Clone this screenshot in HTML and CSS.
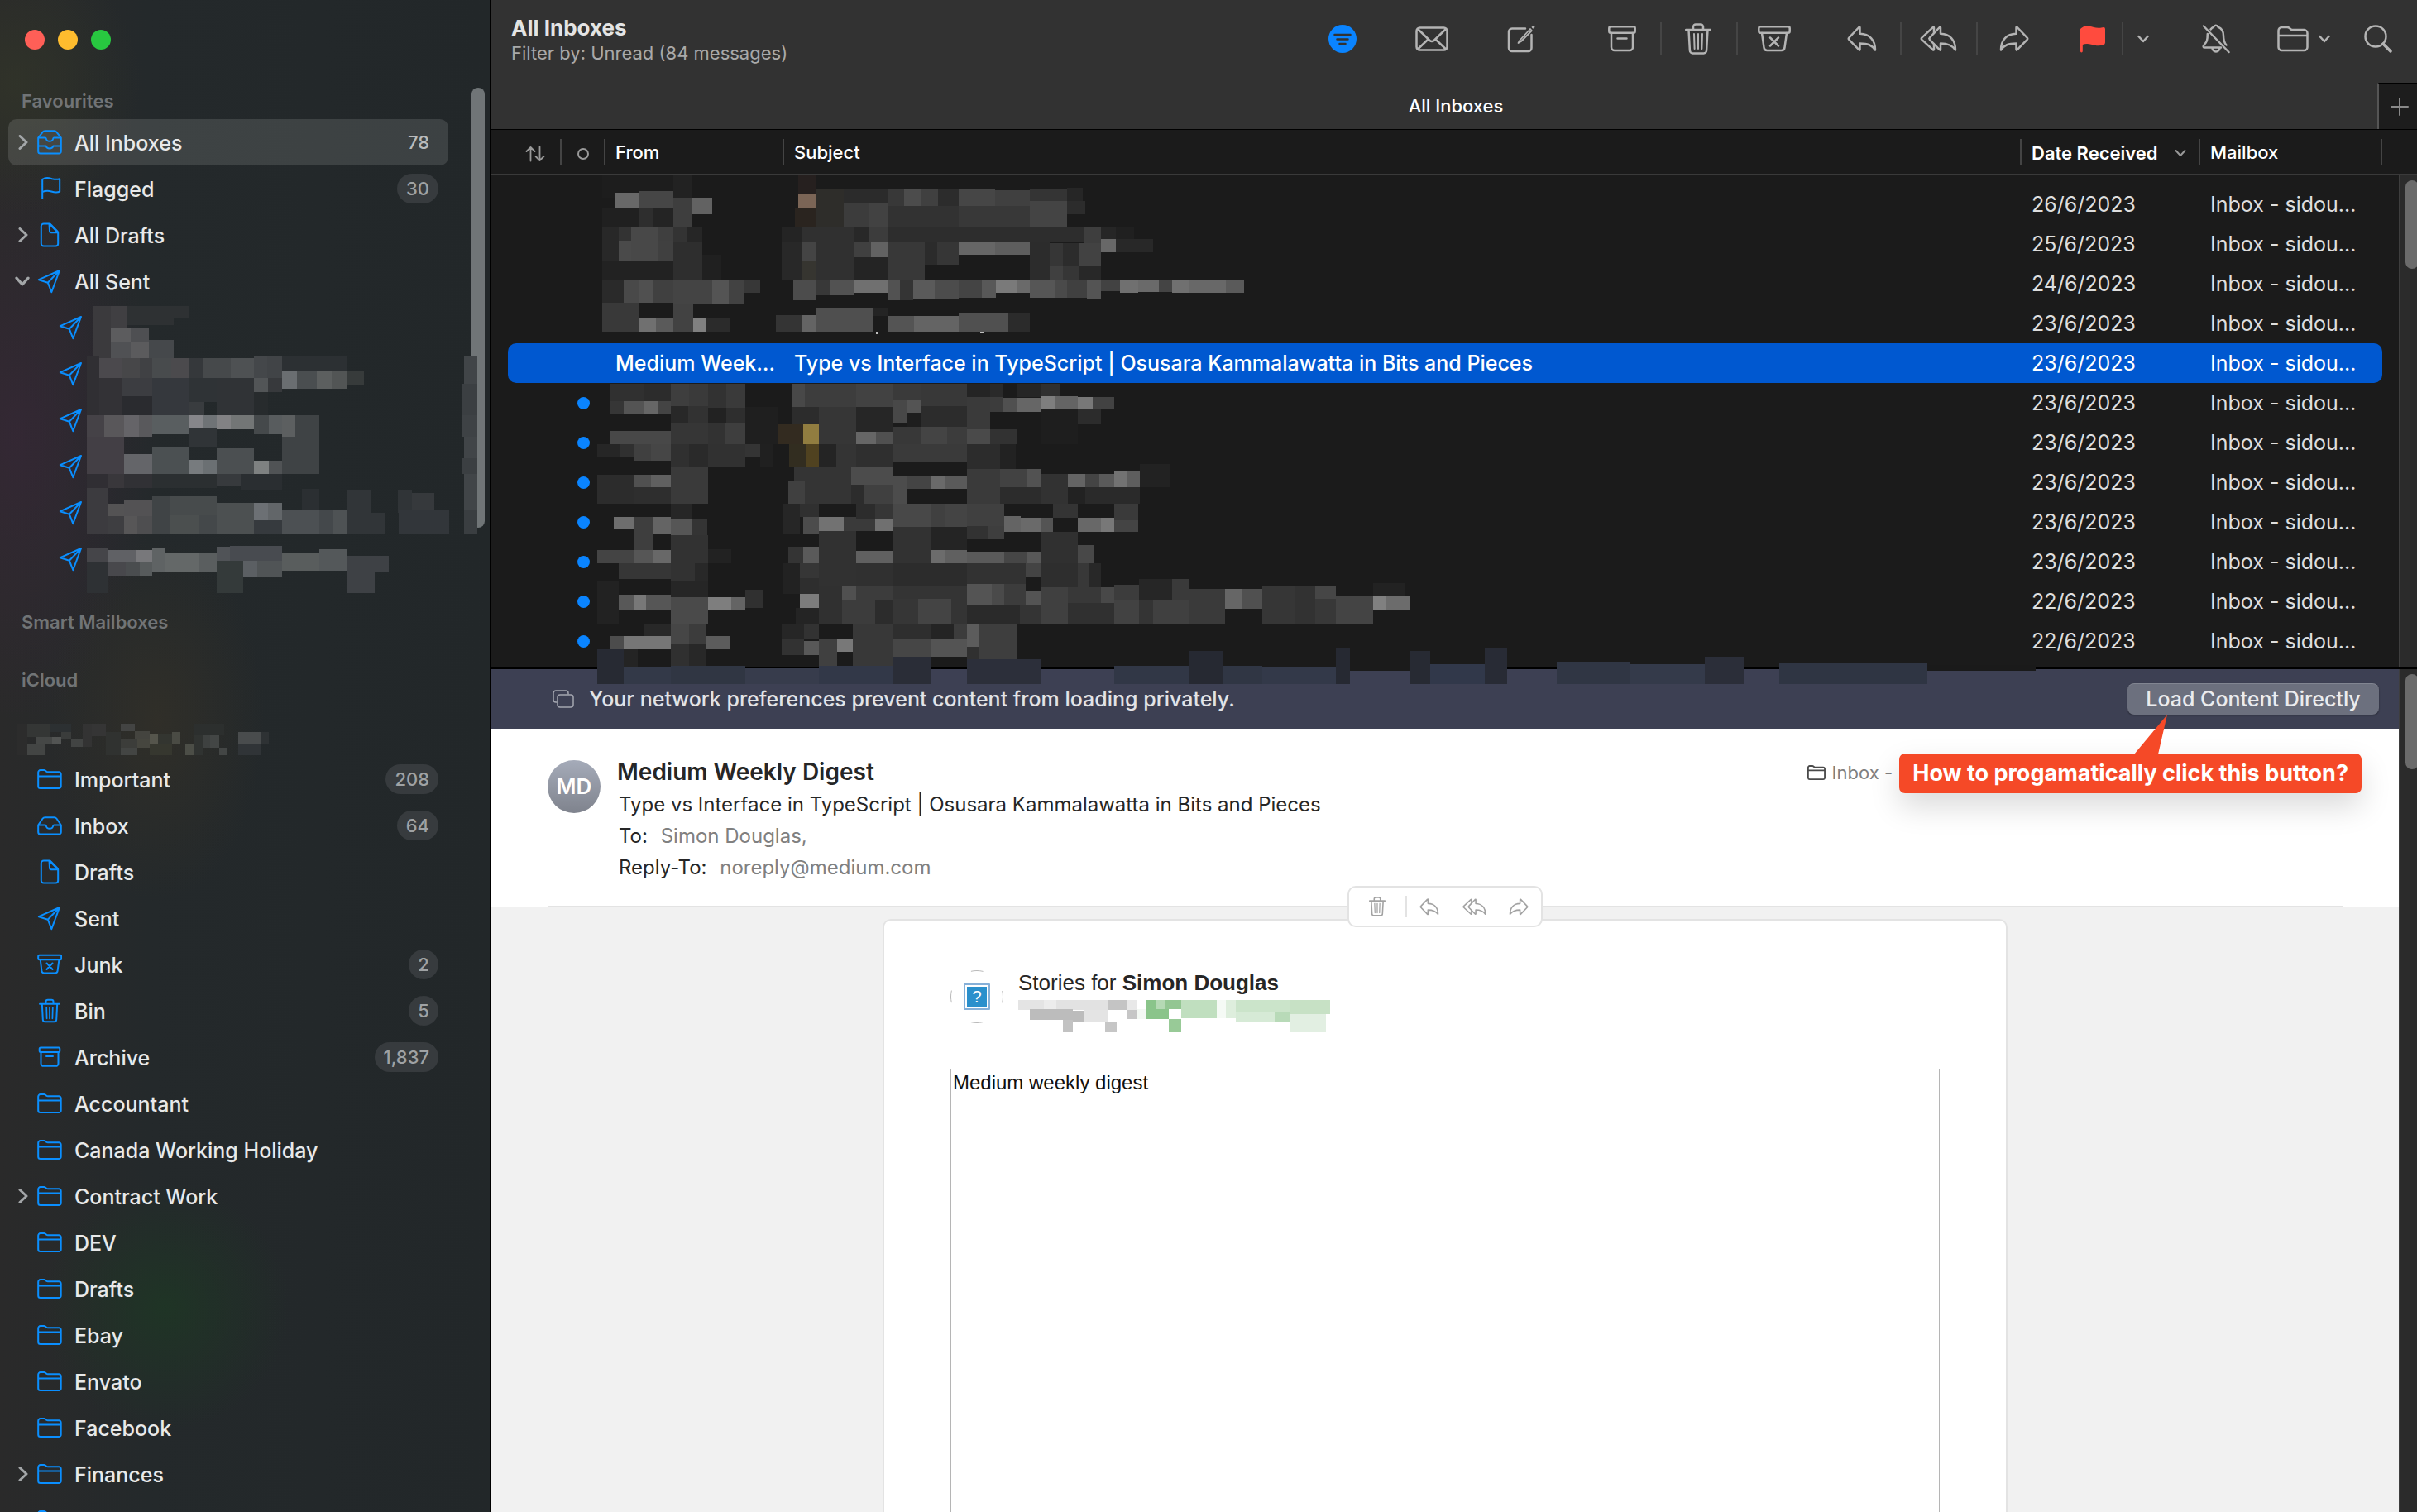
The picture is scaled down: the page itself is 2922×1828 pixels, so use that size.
FILE: index.html
```html
<!DOCTYPE html>
<html lang="en">
<head>
    <meta charset="UTF-8">
    <meta name="viewport" content="width=device-width, initial-scale=1.0">
    <title>All Inboxes</title>
    <link rel="stylesheet" href="styles.css">
</head>
<body>
    <!-- Icon sprite -->
    <svg class="sprite">
        <symbol id="i-filter" viewBox="0 0 34 34"><circle cx="17" cy="17" r="17" fill="#0a84ff" stroke="none"/><path d="M7.500 12h19M10.500 17.500h13M13.500 23h7" stroke="#323232" stroke-width="2.500"/></symbol>
        <symbol id="i-mail" viewBox="0 0 40 32"><rect x="1.500" y="2.500" width="37" height="27" rx="4"/><path d="M3 4l14.500 14q2.500 2 5 0L37 4M3 28.500l12.500-12M37 28.500l-12.500-12"/></symbol>
        <symbol id="i-compose" viewBox="0 0 34 34"><path d="M22 4.500H6a4 4 0 0 0-4 4V28a4 4 0 0 0 4 4h19.500a4 4 0 0 0 4-4V12"/><path d="M28 5L15.500 18.500l-2 3.500 3.500-2L29.800 7z" stroke-width="1.800"/><circle cx="31.500" cy="2.800" r="1.300" fill="currentColor" stroke-width="1"/></symbol>
        <symbol id="i-archive" viewBox="0 0 34 32"><rect x="1.300" y="1.300" width="31.400" height="7.500" rx="2"/><path d="M4 9v17a4 4 0 0 0 4 4h18a4 4 0 0 0 4-4V9M11.500 15.500h11"/></symbol>
        <symbol id="i-trash" viewBox="0 0 32 38"><path d="M1.200 8h29.600M10 8V4.500a3 3 0 0 1 3-3h6a3 3 0 0 1 3 3V8M4.500 8l1.400 25a3.500 3.500 0 0 0 3.500 3.400h13.200a3.500 3.500 0 0 0 3.500-3.400L27.500 8"/><path d="M11 13l.6 18M16 13v18M21 13l-.6 18" stroke-width="2"/></symbol>
        <symbol id="i-junk" viewBox="0 0 40 32"><rect x="1.300" y="1.300" width="37.400" height="7.500" rx="2"/><path d="M5 9l2.500 17.500a4 4 0 0 0 4 3.500h17a4 4 0 0 0 4-3.500L35 9M15 14.500l10 10M25 14.500l-10 10"/></symbol>
        <symbol id="i-reply" viewBox="0 0 36 32"><path d="M15.500 2.500v7.200C27 10 34 17 34 29.500 30 23.500 25 21.500 15.500 21.500v7.300q0 1.500-1.200.4L2.300 16.800q-1-1.200 0-2.200L14.300 2q1.200-1 1.200.5z"/></symbol>
        <symbol id="i-replyall" viewBox="0 0 45 32"><path d="M25 2.500v7.200C36 10 43 17 43 29.500 39 23.500 34 21.500 25 21.500v7.300q0 1.500-1.200.4L11.800 16.800q-1-1.200 0-2.200L23.800 2q1.200-1 1.200.5z"/><path d="M17 9V3q0-1.800-1.300-.8L2.300 14.600q-1 1.100 0 2.200L15.700 29.200q1.300 1 1.300-.8v-6"/></symbol>
        <symbol id="i-forward" viewBox="0 0 36 32"><path d="M20.500 2.500v7.200C9 10 2 17 2 29.500 6 23.500 11 21.500 20.500 21.500v7.300q0 1.500 1.200.4l12-12.400q1-1.200 0-2.200L21.700 2q-1.200-1-1.200.5z"/></symbol>
        <symbol id="i-redflag" viewBox="0 0 30 33"><path d="M0 4C3 1 7 0 11 .8c5 1 9 3 15.500 1.400Q30 1.200 30 4v16.500q0 2-2 2.800c-6 2-10 .7-15-.6-4-1-7-1-10.200.4V31a1.400 1.400 0 0 1-2.800 0z" fill="#ff4b3e" stroke="none"/></symbol>
        <symbol id="i-chevdown" viewBox="0 0 14 10"><path d="M1.500 2L7 8l5.500-6"/></symbol>
        <symbol id="i-chevright" viewBox="0 0 12 18"><path d="M2 1.500l8 7.500-8 7.500"/></symbol>
        <symbol id="i-bell" viewBox="0 0 34 36"><path d="M10.500 6.500C12 4.500 13 4 14 3.700a3 3 0 0 1 5.600 0C24 5.500 26 9 26 14c0 6 .7 8.500 3.500 11.500M6.800 12c0 8-1 10-4.300 13.500-1.500 2-.8 3 1 3H23M12.500 29a4.500 4.500 0 0 0 9 0M2 2.500L32.500 34"/></symbol>
        <symbol id="i-bigfolder" viewBox="0 0 38 32"><path d="M1.500 6a4 4 0 0 1 4-4h6.500q1.600 0 2.800 1l1.500 1.200q1 .9 2.500.9H32.500a4 4 0 0 1 4 4V26a4 4 0 0 1-4 4h-27a4 4 0 0 1-4-4zM1.500 12h35"/></symbol>
        <symbol id="i-search" viewBox="0 0 34 34"><circle cx="14" cy="14" r="12.500"/><path d="M23 23l9 9" stroke-width="3.500"/></symbol>
        <symbol id="i-sort" viewBox="0 0 24 20"><path d="M6.500 18.500V2M1.500 7l5-5 5 5M17.500 1.500V18M12.500 13l5 5 5-5"/></symbol>
        <symbol id="i-plus" viewBox="0 0 22 22"><path d="M11 1v20M1 11h20"/></symbol>
        <symbol id="i-windows" viewBox="0 0 26 22"><path d="M5 15H4a3 3 0 0 1-3-3V4a3 3 0 0 1 3-3h12a3 3 0 0 1 3 3v1"/><rect x="6" y="6" width="19" height="15" rx="3"/></symbol>

        <symbol id="i-inboxes" viewBox="0 0 30 30"><path d="M1.200 26V9.500L6.500 2.800Q7.600 1.200 9.500 1.200h11q1.900 0 3 1.600l5.300 6.700V26a2.600 2.600 0 0 1-2.600 2.600H3.800A2.600 2.600 0 0 1 1.200 26zM1.200 9.500h8.500q.8 0 1 .9a4.400 4.400 0 0 0 8.600 0q.2-.9 1-.9h8.500M1.200 19.500h9.500a4.400 3.800 0 0 0 8.600 0h9.500"/></symbol>
        <symbol id="i-flag" viewBox="0 0 30 30"><path d="M6.200 27V3.800C11 .8 14 2 18 3.200c3.500.8 6 .9 9.200 0V18.600c-3.500 1.400-6.500.9-10-.1-4-1.100-7-1.200-11 .6"/></symbol>
        <symbol id="i-doc" viewBox="0 0 30 30"><path d="M14.500 1.500H7.800a3 3 0 0 0-3 3v21a3 3 0 0 0 3 3h14.400a3 3 0 0 0 3-3V12.300zM14.500 1.500q1.200 0 2 .9l7.800 8q.9.900.9 1.900H17q-2 0-2-2z"/></symbol>
        <symbol id="i-plane" viewBox="0 0 30 30"><path d="M27 2L1.800 13.200l11 3.500 4.500 11.500zM27 2L12.800 16.700"/></symbol>
        <symbol id="i-folder" viewBox="0 0 30 30"><path d="M1.200 6.700a2.600 2.600 0 0 1 2.600-2.600h4.500q1 0 1.700.6l1.200 1q.7.600 1.700.600h13.200a2.600 2.600 0 0 1 2.600 2.600V23.500a2.600 2.600 0 0 1-2.600 2.600H3.800a2.600 2.600 0 0 1-2.600-2.600zM1.200 11.500h27.500"/></symbol>
        <symbol id="i-inbox" viewBox="0 0 30 30"><path d="M1.200 23V14.500L6.500 6.800Q7.600 5.200 9.500 5.200h11q1.900 0 3 1.600l5.300 7.700V23a2.600 2.600 0 0 1-2.600 2.600H3.800A2.600 2.600 0 0 1 1.200 23zM1.200 14.500h8.500q.8 0 1 .9a4.400 4.400 0 0 0 8.600 0q.2-.9 1-.9h8.500"/></symbol>
        <symbol id="i-sjunk" viewBox="0 0 30 30"><rect x="1.200" y="3.800" width="28" height="5.500" rx="1.500"/><path d="M3.800 9.300l1.600 13.500a3 3 0 0 0 3 2.600h13.200a3 3 0 0 0 3-2.600L26.400 9.300M11.500 13.500l7 7.500M18.500 13.500l-7 7.500"/></symbol>
        <symbol id="i-strash" viewBox="0 0 30 30"><path d="M3 6.800h24M10.500 6.800V4a2.300 2.300 0 0 1 2.300-2.300h4.400A2.300 2.300 0 0 1 19.500 4v2.800M5.800 6.800l1 19a2.600 2.600 0 0 0 2.600 2.500h11.200a2.600 2.600 0 0 0 2.600-2.500l1-19"/><path d="M11.200 10.800l.4 13.500M15 10.800v13.500M18.800 10.800l-.4 13.500" stroke-width="1.700"/></symbol>
        <symbol id="i-sarchive" viewBox="0 0 30 30"><rect x="2.700" y="3.500" width="24.600" height="5.500" rx="1.500"/><path d="M4.500 9v13.800a3 3 0 0 0 3 3h15a3 3 0 0 0 3-3V9M11 14h8"/></symbol>
    </svg>

    <div class="window">
        <aside class="sidebar">
            <div class="traffic">
                <button class="light close" aria-label="Close"></button>
                <button class="light minimise" aria-label="Minimise"></button>
                <button class="light zoom" aria-label="Zoom"></button>
            </div>

            <h2 class="section">Favourites</h2>
            <nav class="folders">
                <a href="#" class="folder active"><svg class="chev"><use href="#i-chevright"/></svg><svg class="icon"><use href="#i-inboxes"/></svg><span class="label">All Inboxes</span><span class="count">78</span></a>
                <a href="#" class="folder"><span class="chev"></span><svg class="icon"><use href="#i-flag"/></svg><span class="label">Flagged</span><span class="count">30</span></a>
                <a href="#" class="folder"><svg class="chev"><use href="#i-chevright"/></svg><svg class="icon"><use href="#i-doc"/></svg><span class="label">All Drafts</span></a>
                <a href="#" class="folder"><svg class="chev open"><use href="#i-chevdown"/></svg><svg class="icon"><use href="#i-plane"/></svg><span class="label">All Sent</span></a>
                <a href="#" class="folder sub" aria-label="Sent 1"><svg class="icon"><use href="#i-plane"/></svg></a>
                <a href="#" class="folder sub" aria-label="Sent 2"><svg class="icon"><use href="#i-plane"/></svg></a>
                <a href="#" class="folder sub" aria-label="Sent 3"><svg class="icon"><use href="#i-plane"/></svg></a>
                <a href="#" class="folder sub" aria-label="Sent 4"><svg class="icon"><use href="#i-plane"/></svg></a>
                <a href="#" class="folder sub" aria-label="Sent 5"><svg class="icon"><use href="#i-plane"/></svg></a>
                <a href="#" class="folder sub" aria-label="Sent 6"><svg class="icon"><use href="#i-plane"/></svg></a>
            </nav>

            <h2 class="section">Smart Mailboxes</h2>
            <h2 class="section">iCloud</h2>
            <div class="account"><svg class="tiles" data-tiles="account" viewBox="55 406 794 106" preserveAspectRatio="none"></svg></div>
            <nav class="folders">
                <a href="#" class="folder"><span class="chev"></span><svg class="icon"><use href="#i-folder"/></svg><span class="label">Important</span><span class="count">208</span></a>
                <a href="#" class="folder"><span class="chev"></span><svg class="icon"><use href="#i-inbox"/></svg><span class="label">Inbox</span><span class="count">64</span></a>
                <a href="#" class="folder"><span class="chev"></span><svg class="icon"><use href="#i-doc"/></svg><span class="label">Drafts</span></a>
                <a href="#" class="folder"><span class="chev"></span><svg class="icon"><use href="#i-plane"/></svg><span class="label">Sent</span></a>
                <a href="#" class="folder"><span class="chev"></span><svg class="icon"><use href="#i-sjunk"/></svg><span class="label">Junk</span><span class="count">2</span></a>
                <a href="#" class="folder"><span class="chev"></span><svg class="icon"><use href="#i-strash"/></svg><span class="label">Bin</span><span class="count">5</span></a>
                <a href="#" class="folder"><span class="chev"></span><svg class="icon"><use href="#i-sarchive"/></svg><span class="label">Archive</span><span class="count">1,837</span></a>
                <a href="#" class="folder"><span class="chev"></span><svg class="icon"><use href="#i-folder"/></svg><span class="label">Accountant</span></a>
                <a href="#" class="folder"><span class="chev"></span><svg class="icon"><use href="#i-folder"/></svg><span class="label">Canada Working Holiday</span></a>
                <a href="#" class="folder"><svg class="chev"><use href="#i-chevright"/></svg><svg class="icon"><use href="#i-folder"/></svg><span class="label">Contract Work</span></a>
                <a href="#" class="folder"><span class="chev"></span><svg class="icon"><use href="#i-folder"/></svg><span class="label">DEV</span></a>
                <a href="#" class="folder"><span class="chev"></span><svg class="icon"><use href="#i-folder"/></svg><span class="label">Drafts</span></a>
                <a href="#" class="folder"><span class="chev"></span><svg class="icon"><use href="#i-folder"/></svg><span class="label">Ebay</span></a>
                <a href="#" class="folder"><span class="chev"></span><svg class="icon"><use href="#i-folder"/></svg><span class="label">Envato</span></a>
                <a href="#" class="folder"><span class="chev"></span><svg class="icon"><use href="#i-folder"/></svg><span class="label">Facebook</span></a>
                <a href="#" class="folder"><svg class="chev"><use href="#i-chevright"/></svg><svg class="icon"><use href="#i-folder"/></svg><span class="label">Finances</span></a>
                <a href="#" class="folder" aria-label="More"><span class="chev"></span><svg class="icon"><use href="#i-folder"/></svg></a>
            </nav>
            <div class="side-scroll"></div>
            <svg class="tiles side-tiles" data-tiles="sidebar" viewBox="0 0 1568 1140" preserveAspectRatio="none"></svg>
        </aside>

        <main class="main">
            <header class="toolbar">
                <div class="heading">
                    <h1>All Inboxes</h1>
                    <p>Filter by: Unread (84 messages)</p>
                </div>
                <div class="tools">
                    <button class="tool" aria-label="Filter"><svg width="34" height="34"><use href="#i-filter"/></svg></button>
                    <button class="tool" aria-label="Get mail"><svg width="40" height="32"><use href="#i-mail"/></svg></button>
                    <button class="tool" aria-label="New message"><svg width="34" height="34"><use href="#i-compose"/></svg></button>
                </div>
                <div class="tool-group">
                    <button class="tool wide" aria-label="Archive"><svg width="34" height="32"><use href="#i-archive"/></svg></button>
                    <button class="tool wide" aria-label="Delete"><svg width="32" height="38"><use href="#i-trash"/></svg></button>
                    <button class="tool wide" aria-label="Junk"><svg width="40" height="32"><use href="#i-junk"/></svg></button>
                </div>
                <div class="tool-group">
                    <button class="tool wide" aria-label="Reply"><svg width="36" height="32"><use href="#i-reply"/></svg></button>
                    <button class="tool wide" aria-label="Reply all"><svg width="45" height="32"><use href="#i-replyall"/></svg></button>
                    <button class="tool wide" aria-label="Forward"><svg width="36" height="32"><use href="#i-forward"/></svg></button>
                </div>
                <div class="tool-group flag-group">
                    <button class="tool" aria-label="Flag"><svg width="30" height="33"><use href="#i-redflag"/></svg></button>
                    <button class="tool narrow" aria-label="Flag colour"><svg width="14" height="10"><use href="#i-chevdown"/></svg></button>
                </div>
                <div class="tools end">
                    <button class="tool" aria-label="Mute"><svg width="34" height="36"><use href="#i-bell"/></svg></button>
                    <button class="tool move" aria-label="Move to"><svg width="38" height="32"><use href="#i-bigfolder"/></svg><svg width="14" height="10"><use href="#i-chevdown"/></svg></button>
                    <button class="tool" aria-label="Search"><svg width="34" height="34"><use href="#i-search"/></svg></button>
                </div>
            </header>

            <div class="tabs">
                <button class="tab">All Inboxes</button>
                <button class="new-tab" aria-label="New tab"><svg width="22" height="22"><use href="#i-plus"/></svg></button>
            </div>

            <section class="list">
                <table class="messages">
                    <colgroup>
                        <col class="c-sort"><col class="c-dot"><col class="c-from"><col><col class="c-date"><col class="c-box">
                    </colgroup>
                    <thead>
                        <tr>
                            <th aria-label="Sort"><svg class="sort" width="24" height="20"><use href="#i-sort"/></svg></th>
                            <th aria-label="Unread"><span class="ring"></span></th>
                            <th>From</th>
                            <th>Subject</th>
                            <th class="sorted"><span>Date Received</span><svg width="14" height="10"><use href="#i-chevdown"/></svg></th>
                            <th>Mailbox</th>
                        </tr>
                    </thead>
                    <tbody>
                        <tr><td></td><td></td><td></td><td></td><td>26/6/2023</td><td>Inbox - sidou…</td></tr>
                        <tr><td></td><td></td><td></td><td></td><td>25/6/2023</td><td>Inbox - sidou…</td></tr>
                        <tr><td></td><td></td><td></td><td></td><td>24/6/2023</td><td>Inbox - sidou…</td></tr>
                        <tr><td></td><td></td><td></td><td></td><td>23/6/2023</td><td>Inbox - sidou…</td></tr>
                        <tr class="selected"><td></td><td></td><td class="text">Medium Week…</td><td class="text">Type vs Interface in TypeScript | Osusara Kammalawatta in Bits and Pieces</td><td>23/6/2023</td><td>Inbox - sidou…</td></tr>
                        <tr><td></td><td><span class="dot"></span></td><td></td><td></td><td>23/6/2023</td><td>Inbox - sidou…</td></tr>
                        <tr><td></td><td><span class="dot"></span></td><td></td><td></td><td>23/6/2023</td><td>Inbox - sidou…</td></tr>
                        <tr><td></td><td><span class="dot"></span></td><td></td><td></td><td>23/6/2023</td><td>Inbox - sidou…</td></tr>
                        <tr><td></td><td><span class="dot"></span></td><td></td><td></td><td>23/6/2023</td><td>Inbox - sidou…</td></tr>
                        <tr><td></td><td><span class="dot"></span></td><td></td><td></td><td>23/6/2023</td><td>Inbox - sidou…</td></tr>
                        <tr><td></td><td><span class="dot"></span></td><td></td><td></td><td>22/6/2023</td><td>Inbox - sidou…</td></tr>
                        <tr><td></td><td><span class="dot"></span></td><td></td><td></td><td>22/6/2023</td><td>Inbox - sidou…</td></tr>
                    </tbody>
                </table>
                <div class="gutter list-gutter"><div class="thumb"></div></div>
                <svg class="tiles list-tiles" data-tiles="list" viewBox="0 0 1568 1568" preserveAspectRatio="none"></svg>
            </section>

            <section class="reader">
                <article class="message">
                    <div class="banner">
                        <svg width="26" height="22"><use href="#i-windows"/></svg>
                        <p>Your network preferences prevent content from loading privately.</p>
                        <div class="load">
                            <button class="load-btn">Load Content Directly</button>
                            <div class="callout">How to progamatically click this button?
                                <svg class="pointer" viewBox="0 0 40 48" width="40" height="48"><path d="M40 0L29 48H0z"/></svg>
                            </div>
                        </div>
                    </div>

                    <header class="envelope">
                        <div class="avatar">MD</div>
                        <div class="details">
                            <h2>Medium Weekly Digest</h2>
                            <p>Type vs Interface in TypeScript | Osusara Kammalawatta in Bits and Pieces</p>
                            <p>To: <span class="value">Simon Douglas,</span></p>
                            <p>Reply-To: <span class="value">noreply@medium.com</span></p>
                        </div>
                        <div class="location"><svg width="22" height="22"><use href="#i-folder"/></svg>Inbox -</div>
                        <div class="quick">
                            <button aria-label="Delete"><svg width="20" height="24"><use href="#i-trash"/></svg></button>
                            <button aria-label="Reply"><svg width="24" height="21"><use href="#i-reply"/></svg></button>
                            <button aria-label="Reply all"><svg width="29" height="21"><use href="#i-replyall"/></svg></button>
                            <button aria-label="Forward"><svg width="24" height="21"><use href="#i-forward"/></svg></button>
                        </div>
                    </header>

                    <div class="body">
                        <div class="card">
                            <div class="intro">
                                <svg class="missing" viewBox="0 0 64 64" width="64" height="64">
                                    <circle cx="32" cy="32" r="31.500" stroke="#b9b9b9" stroke-width="1" fill="none" stroke-dasharray="14 35.480" stroke-dashoffset="7"/>
                                    <rect x="17" y="17" width="30" height="30" fill="#fff" stroke="#86b0d8" stroke-width="2"/>
                                    <rect x="20" y="20" width="24" height="24" fill="#2b90cc" stroke="none"/>
                                    <text x="32" y="39" text-anchor="middle">?</text>
                                </svg>
                                <div>
                                    <p class="stories">Stories for <b>Simon Douglas</b></p>
                                    <svg class="tiles handle-tiles" data-tiles="handle" viewBox="335 480 656 117" preserveAspectRatio="none"></svg>
                                </div>
                            </div>
                            <div class="digest">Medium weekly digest</div>
                        </div>
                    </div>
                </article>
                <div class="gutter"><div class="thumb reader-thumb"></div></div>
            </section>
        </main>
    </div>

    <script src="tiles.js"></script>
</body>
</html>
```
FILE: tiles.js
```js
// Redaction tiles. Each entry is "left,top,right,bottom,shade";
// a two digit shade is a grey, a six digit one a full hex colour.
const TILES = {
    account: `
        55,406,86,512,2c 86,406,157,451,343635 157,406,225,434,2c3032 86,476,141,512,434544
        112,451,165,476,454746 165,451,193,476,525453 193,434,225,459,3a3c3b 225,459,261,484,424443
        261,406,290,484,33 290,406,335,448,35 335,434,382,512,303230 382,406,426,431,434443
        382,459,434,487,3c3d3a 382,487,434,512,434543 426,431,473,459,44443f 434,459,473,487,46463f
        473,442,499,476,55554c 473,476,544,512,36372f 499,442,544,476,333530 544,434,570,476,4a4b44
        585,476,612,512,4c4e47 612,406,708,445,2c2f2e 612,445,640,512,303331 640,445,664,487,3e4140
        664,445,693,487,434645 693,487,719,512,434645 753,434,823,473,494c4d 753,473,823,512,303437
        823,434,849,473,2e3234`,
    sidebar: `
        295,0,350,188,3b3a3d 350,0,402,78,403f42 402,0,549,68,2e3133 549,0,598,45,2e3133
        350,78,413,132,5c5c5e 413,78,470,132,4e4f52 350,132,413,188,505154 413,132,470,188,5b5b5d
        470,123,549,188,45484b 274,180,314,395,302f33 314,189,387,261,4b494d 387,189,442,261,474749
        442,189,481,261,404144 481,189,542,261,484b4d 542,189,598,261,4b4a4d 598,189,643,261,35383b
        643,189,729,261,46494b 729,189,802,261,4e5153 802,180,845,261,44474a 845,180,891,261,414447
        891,180,1098,237,2c3033 891,237,938,300,6a6e71 938,237,1001,300,4a4e50 1001,237,1048,300,5c5f5f
        1048,237,1098,300,525555 1098,237,1150,288,373b3b 314,261,387,395,333236 387,261,481,327,3c3d41
        387,327,481,395,2a2b2f 481,261,598,395,35383d 598,261,685,348,2f3336 598,348,645,395,393c3f
        685,261,802,395,303336 802,261,847,312,525557 847,261,891,312,37393c 802,312,847,395,272b2d
        274,395,329,474,454247 329,395,392,474,59575a 392,395,439,474,656468 439,395,481,474,59595c
        481,395,598,465,595e60 598,395,640,444,86868a 640,395,685,444,6f7376 685,395,729,447,828284
        729,395,802,447,737676 802,395,849,465,45494b 849,395,891,465,585c5e 891,395,933,474,5c5f60
        933,395,1009,608,3f4345 598,444,685,513,303437 891,474,933,608,3f4345 274,474,392,608,433f45
        392,537,481,608,646569 481,513,598,608,4b5052 598,558,640,608,777b7e 640,558,685,608,6b7073
        685,516,802,608,4b4f51 802,561,849,608,7e8181 849,561,891,608,505355 274,608,340,660,302e33
        340,608,392,660,39373b 392,608,481,660,313135 481,608,685,660,2b2f31 685,608,760,654,373a3d
        760,608,891,665,2a2e31 274,660,340,825,3c3b3f 340,717,392,762,545354 392,702,481,762,535254
        340,762,392,825,3e3e41 392,762,434,825,575657 434,762,481,825,4e4e50 481,690,536,825,404446
        536,690,685,759,474b4c 536,759,627,825,4b4f4f 627,759,685,825,44484a 685,714,802,825,4c5051
        802,714,847,777,6c7074 847,714,891,777,626669 802,777,891,825,363a3e 891,738,1009,825,4c5053
        1009,738,1053,825,44484b 1053,738,1098,825,4e5254 954,663,1009,738,2b2f32 1098,666,1173,825,313538
        1173,750,1215,825,313538 1257,669,1301,750,303437 1301,678,1372,741,36393c 1260,741,1419,825,32363a
        274,876,340,930,454549 340,885,429,930,606165 429,885,481,930,78787b 481,876,520,963,5f6364
        520,894,627,963,646868 627,894,685,963,5a5e5f 340,930,397,978,48484c 397,930,442,978,4a4d4f
        442,930,481,978,575b5c 274,930,340,1041,2e3134 685,873,727,924,505357 727,870,891,924,484b50
        685,924,768,1041,343a3a 768,924,813,981,5b5f63 813,924,891,981,505456 891,894,1009,960,595d5d
        1009,882,1098,960,54585a 1098,906,1228,966,3e4145 1098,966,1184,1041,3e4145
        1466,180,1508,282,414548 1461,282,1508,396,3b3f42 1458,396,1508,474,3e4245 1466,474,1508,552,414548
        1458,552,1508,608,3b3f42 1466,608,1508,741,414548 1466,741,1508,825,3a3e41`,
    list: `
        176,26,294,90,1d 294,26,325,90,22 502,26,532,78,26201f 198,76,238,118,68 238,71,294,118,46
        294,90,325,171,3e 325,90,359,136,62 176,118,238,171,20 238,118,260,171,2e 260,118,294,171,24
        204,171,224,210,33 224,171,268,267,48 268,171,294,210,3f 268,210,294,267,40 294,171,316,214,33
        316,171,342,214,26 204,210,224,267,4a 176,171,204,267,28 294,214,342,318,2e 176,267,294,318,22
        342,250,374,318,20 176,318,212,383,2a 212,318,238,383,49 238,318,262,383,50 262,318,294,383,40
        294,318,359,387,44 359,318,386,387,54 386,318,413,387,42 413,318,439,356,37 176,383,238,463,39
        238,427,265,463,70 265,427,294,463,5a 294,387,327,463,42 327,427,349,463,80 349,427,389,463,2b
        502,78,532,120,7b6556 497,120,532,171,2a241f 532,67,578,171,2e2d2a 578,67,651,104,2b
        578,104,620,171,3c 620,104,651,171,42 651,67,678,113,38 678,67,706,113,4c 706,67,734,113,40
        734,67,769,113,2c 769,67,830,113,46 830,69,887,113,40 887,65,949,99,34 949,62,975,99,26
        887,99,949,171,44 949,99,979,136,2c 651,113,769,171,32 769,113,887,171,38
        475,171,508,214,24 508,171,532,214,30 532,171,594,318,30 594,171,620,214,28 620,171,651,214,3c
        651,171,978,214,2d 978,171,1005,217,3e 1005,171,1030,205,26 1030,171,1061,205,20
        475,214,508,318,28 508,214,532,265,44 508,265,532,318,363530 594,214,623,256,40 623,214,651,256,62
        651,214,712,318,38 712,214,733,277,2b 733,214,769,277,36 769,212,830,248,66 830,212,887,248,5e
        1030,205,1092,241,28 1005,205,1030,241,68 887,214,920,318,2c 920,217,942,280,36 942,217,970,280,2c
        970,217,1005,280,42 920,280,942,318,40 942,280,970,318,36 970,280,1005,318,28 594,256,651,318,24
        494,318,532,377,4c 532,318,556,362,38 556,318,594,362,52 594,318,651,356,70 651,318,671,375,52
        671,318,693,375,34 693,318,729,374,5a 729,318,769,374,4c 769,318,807,369,44 807,318,831,369,58
        831,318,865,354,7a 865,318,887,354,6a 887,318,928,369,56 928,318,949,369,4a 949,318,982,369,40
        982,318,1005,371,54 1005,318,1037,351,42 1037,318,1067,356,70 1067,318,1102,353,6a
        1102,318,1124,353,44 1124,318,1151,356,70 1151,318,1213,356,68 1213,318,1243,356,5a
        465,417,509,463,34 509,417,532,463,64 532,397,626,463,4f 626,397,651,420,24 651,420,694,463,54
        694,420,769,463,64 769,413,851,463,50 851,413,887,463,2b 631,463,634,471,c0 805,463,811,469,c0
        190,609,246,657,30 246,609,290,657,2c 212,657,246,693,54 246,657,268,693,66 268,657,290,693,44
        190,657,212,693,36 290,609,320,670,3e 320,609,352,670,3a 352,609,382,676,32 382,609,414,676,3a
        290,670,319,717,28 319,670,352,717,32 352,676,382,717,22 382,676,414,717,2e 414,673,468,777,1f
        190,740,290,777,48 290,717,352,777,36 352,717,381,777,32 381,717,414,777,3e
        168,777,206,814,26 206,777,230,814,30 230,777,257,823,40 257,777,290,823,46 290,777,320,839,30
        320,777,352,839,2a 352,777,414,839,31 414,777,439,814,34 439,777,461,841,20
        290,839,352,943,3a 168,862,230,943,2c 230,862,257,897,50 257,862,290,897,60 230,897,290,943,2e
        195,980,230,1015,6e 230,980,261,1073,3e 261,980,290,1026,64 290,943,325,985,26 290,985,325,1031,56
        325,985,351,1031,34 290,1031,352,1160,32 168,1073,230,1110,44 230,1073,260,1110,56
        260,1073,290,1110,68 204,1110,290,1153,36 352,1070,391,1110,22 330,1110,352,1160,28
        204,1197,228,1241,58 228,1197,249,1241,78 249,1197,290,1241,56 290,1204,352,1277,4a
        352,1204,391,1238,7e 391,1204,414,1238,64 414,1183,443,1234,30 168,1160,204,1277,22
        290,1160,352,1204,26 190,1312,212,1349,4c 212,1312,290,1349,76 290,1277,320,1335,46
        320,1277,348,1335,3c 348,1312,388,1349,5c 246,1277,290,1312,28 290,1335,320,1398,30
        320,1335,348,1398,28 212,1349,235,1398,24
        491,609,513,673,48 513,609,598,673,3d 598,609,659,673,42 659,609,706,655,3a 706,609,783,670,38
        491,673,536,722,2c 536,673,598,777,36 598,673,659,742,26 659,655,682,717,48 682,655,706,689,54
        682,689,706,728,1e 706,670,783,728,2c 783,609,821,646,24 783,646,821,736,3a 821,609,843,646,2a
        867,609,905,646,26 905,609,936,643,30 821,646,843,686,3c 843,648,867,686,50 867,648,905,686,66
        905,643,930,680,7e 930,643,967,680,64 967,646,992,680,78 992,646,1027,680,42 967,680,1005,722,2c
        905,680,967,777,1e 468,722,510,777,332b20 510,722,536,777,917d40 598,742,631,777,66
        631,742,659,777,50 659,728,706,777,38 706,728,750,777,44 750,728,783,777,3c 783,736,821,777,4a
        821,736,867,777,32 487,777,516,841,322d20 516,777,536,841,504220 536,777,565,839,24
        565,777,598,839,34 598,777,659,839,2f 659,777,783,826,3a 783,777,838,847,2c 838,777,864,847,22
        495,841,536,943,34 486,880,513,943,40 536,839,590,943,34 590,839,659,889,4c 590,889,612,943,2c
        612,889,659,943,40 659,865,684,943,4c 684,865,722,902,44 722,865,747,902,6a 747,865,783,902,5a
        783,847,838,943,3a 838,847,882,897,42 882,847,905,897,52 838,897,905,943,2c 905,860,950,943,32
        950,860,979,897,64 979,860,1003,897,44 1003,860,1027,897,5a 1027,853,1050,897,72
        1050,853,1070,897,5e 1070,832,1120,897,22 950,897,979,943,22 979,897,1070,943,2a
        476,943,505,1025,26 505,943,536,980,30 510,980,536,1025,4c 536,980,578,1019,72 578,980,630,1019,3a
        630,985,659,1019,70 598,943,630,985,2c 630,943,659,985,36 659,943,722,1008,48 722,943,745,1008,40
        745,943,783,1008,44 783,943,845,1005,40 783,1005,817,1042,32 817,1005,845,1042,3e
        845,978,872,1022,64 872,982,905,1022,6a 905,982,926,1022,54 926,943,967,982,34
        905,1022,967,1110,30 967,982,1005,1022,68 1005,982,1027,1022,78 1027,943,1067,990,3a
        1027,990,1067,1022,44 536,1019,598,1174,31 659,1008,722,1110,32 722,1008,783,1073,24
        486,1063,510,1110,34 510,1063,536,1110,5a 598,1074,659,1110,60 722,1073,747,1110,6c
        747,1073,783,1110,60 783,1077,845,1110,5a 845,1077,882,1110,46 882,1077,905,1110,58
        967,1058,994,1110,48 476,1110,505,1194,22 505,1110,536,1150,36 505,1150,536,1194,2e
        505,1194,536,1234,7c 598,1110,659,1174,30 659,1110,783,1174,2c 783,1110,880,1167,32
        880,1110,905,1146,44 905,1110,967,1176,2e 967,1110,985,1176,38 985,1110,1005,1176,28
        498,1234,536,1277,24 536,1174,575,1277,30 575,1174,598,1211,50 598,1174,659,1211,3c
        575,1211,630,1277,3c 630,1211,659,1277,2c 659,1174,783,1209,34 659,1209,701,1277,36
        701,1209,756,1277,44 756,1209,783,1277,34 783,1227,870,1277,2a 783,1167,824,1227,54
        824,1167,845,1227,4a 845,1167,880,1227,3c 880,1188,905,1227,54 905,1176,950,1277,40
        950,1176,1005,1220,38 1005,1176,1027,1220,48 950,1220,1027,1277,30 870,1227,905,1277,34
        1027,1169,1069,1211,3c 1027,1211,1069,1277,42 1069,1153,1124,1211,26 1124,1153,1151,1211,3a
        1069,1211,1092,1277,34 1092,1211,1151,1277,40 1151,1181,1212,1277,3a 1212,1181,1241,1236,66
        1241,1181,1274,1236,50 1274,1174,1327,1277,36 1327,1174,1362,1277,32 1362,1174,1396,1208,46
        1362,1208,1396,1277,38 1396,1201,1458,1277,44 1458,1201,1480,1241,80 1480,1201,1518,1241,6c
        1458,1164,1511,1201,22 475,1277,512,1320,26 512,1277,536,1320,32 475,1320,512,1364,32
        512,1325,536,1364,58 536,1318,567,1395,40 567,1318,593,1356,78 593,1277,659,1395,38
        659,1277,722,1320,2e 722,1277,761,1320,24 761,1277,783,1320,3c 659,1320,722,1370,46
        722,1318,783,1370,54 783,1277,803,1342,5c 803,1277,865,1377,3e 783,1342,803,1377,30
        168,1349,212,1446,272a33 212,1397,290,1446,333948 290,1395,414,1446,303643 414,1402,536,1446,373c4c
        536,1395,659,1446,323848 659,1370,722,1446,2a2d37 783,1377,905,1446,2c2f3a 1027,1395,1151,1446,313746
        1151,1354,1209,1446,262932 1209,1395,1274,1446,303644 1274,1397,1396,1446,333949
        1396,1347,1419,1446,262932 1419,1399,1518,1409,1b 1518,1354,1553,1446,272a33 1553,1390,1643,1446,31384a
        1643,1346,1681,1446,282b35 1763,1384,1886,1446,303644 1886,1390,2009,1446,343a4a
        2009,1370,2074,1446,2b2e39 2133,1386,2379,1446,2f3543 2379,1392,2560,1409,1a`,
    handle: `
        335,480,389,515,e4 389,480,415,515,ec 415,480,524,515,e2 524,480,563,515,c4 563,480,584,515,e8
        359,513,449,552,bc 449,519,474,557,bc 474,515,524,557,e4 563,515,584,549,c6 429,552,449,597,c2
        517,558,542,597,c6 585,513,603,549,f3f8f3 603,480,652,549,8ac48a 625,480,645,513,b5d9b4
        645,480,678,513,93c692 652,549,678,597,98ca97 678,480,753,546,c0dfbf 753,480,772,546,f5faf5
        772,480,793,546,deeedd 793,480,906,522,cbe4ca 793,522,875,560,d6ead6 875,525,906,560,b8dab8
        906,480,991,531,c7e1c5 906,531,983,597,e2efe2`
};

document.querySelectorAll('svg[data-tiles]').forEach((svg) => {
    TILES[svg.dataset.tiles].trim().split(/\s+/).forEach((tile) => {
        const [x1, y1, x2, y2, shade] = tile.split(',');
        const rect = document.createElementNS('http://www.w3.org/2000/svg', 'rect');
        rect.setAttribute('x', x1);
        rect.setAttribute('y', y1);
        rect.setAttribute('width', x2 - x1);
        rect.setAttribute('height', y2 - y1);
        rect.setAttribute('fill', '#' + (shade.length === 2 ? shade.repeat(3) : shade));
        svg.appendChild(rect);
    });
});
```
FILE: styles.css
```css
* {
    box-sizing: border-box;
}
body {
    margin: 0;
    font-family: Inter, "Noto Sans", sans-serif;
    background: #1b1b1b;
    color: #e4e4e4;
}
h1, h2, p {
    margin: 0;
}
button {
    font: inherit;
    color: inherit;
    background: none;
    border: none;
    padding: 0;
}
svg {
    display: block;
    flex: none;
    fill: none;
    stroke: currentColor;
    stroke-width: 2.5;
    stroke-linecap: round;
    stroke-linejoin: round;
}
.sprite {
    position: absolute;
    width: 0;
    height: 0;
}
.tiles {
    stroke: none;
    overflow: visible;
    shape-rendering: crispEdges;
}
.window {
    display: flex;
    height: 100vh;
    overflow: hidden;
}

/* Sidebar */
.sidebar {
    position: relative;
    flex: none;
    width: 594px;
    border-right: 2px solid #000;
    overflow: hidden;
    background:
        radial-gradient(circle at 200px 1580px, rgba(28, 60, 34, 0.6), transparent 150px),
        radial-gradient(ellipse 130px 220px at 190px 870px, rgba(60, 52, 38, 0.5), transparent),
        radial-gradient(ellipse 170px 340px at 20px 530px, rgba(58, 38, 58, 0.6), transparent),
        radial-gradient(ellipse 150px 160px at 20px 100px, rgba(52, 56, 40, 0.6), transparent),
        linear-gradient(90deg, #2a2a2a, #24292b 30%, #222729);
}
.traffic {
    display: flex;
    gap: 16px;
    padding: 36px 30px 40px;
}
.light {
    width: 24px;
    height: 24px;
    border-radius: 50%;
}
.close {
    background: #ff5f57;
}
.minimise {
    background: #febc2e;
}
.zoom {
    background: #28c840;
}
.section {
    margin-top: 26px;
    padding-left: 26px;
    font-size: 22px;
    font-weight: 600;
    line-height: 44px;
    color: #717476;
}
.traffic + .section {
    margin-top: 0;
}
.folders {
    padding: 0 50px 0 10px;
}
.folder {
    display: flex;
    align-items: center;
    height: 56px;
    padding-right: 12px;
    border-radius: 10px;
    font-size: 25px;
    font-weight: 500;
    color: #e8e9e9;
    text-decoration: none;
}
.folder.active {
    background: rgba(255, 255, 255, 0.12);
}
.folder.sub {
    padding-left: 61px;
}
.label {
    padding-top: 2px;
}
.chev {
    flex: none;
    width: 12px;
    height: 18px;
    margin: 0 11px 0 12px;
    color: #a3a6a8;
    stroke-width: 3;
}
.chev.open {
    width: 18px;
    margin: 0 9px 0 8px;
    stroke-width: 2.5;
}
.icon {
    width: 30px;
    height: 30px;
    margin-right: 15px;
    color: #0a8fff;
    stroke-width: 2;
}
.count {
    margin-left: auto;
    min-width: 36px;
    padding: 0 11px;
    border-radius: 18px;
    background: #373b3e;
    font-size: 22px;
    font-weight: 500;
    line-height: 36px;
    text-align: center;
    color: #9fa2a4;
}
.active .count {
    background: none;
    color: #b9bbbc;
}
.account {
    height: 70px;
    padding: 31px 0 0 21px;
}
.account .tiles {
    width: 304px;
    height: 38px;
}
.side-scroll {
    position: absolute;
    top: 106px;
    right: 6px;
    width: 16px;
    height: 532px;
    border-radius: 8px;
    background: #707577;
}
.side-tiles {
    position: absolute;
    top: 370px;
    left: 0;
    width: 600px;
    height: 380px;
}

/* Toolbar and tabs */
.main {
    display: flex;
    flex: 1;
    flex-direction: column;
    min-width: 0;
}
.toolbar {
    display: flex;
    flex: none;
    align-items: center;
    height: 100px;
    padding: 0 17px 6px 24px;
    background: #323232;
}
.heading {
    margin-right: auto;
    padding-top: 2px;
}
.heading h1 {
    font-size: 26px;
    line-height: 32px;
}
.heading p {
    font-size: 22px;
    line-height: 28px;
    color: #a9a9a9;
}
.tools {
    display: flex;
    gap: 48px;
    margin-right: 46px;
    color: #b4b4b4;
}
.tools.end {
    gap: 16px;
    margin: 0 0 0 32px;
}
.tool {
    display: flex;
    flex: none;
    align-items: center;
    justify-content: center;
    width: 60px;
    height: 52px;
}
.tool.wide {
    width: 92px;
}
.tool.narrow {
    width: 52px;
}
.tool.move {
    gap: 12px;
    width: 88px;
    margin-left: 16px;
}
.tool-group {
    display: flex;
    color: #b4b4b4;
}
.tool-group + .tool-group {
    margin-left: 14px;
}
.tool-group .tool + .tool {
    background: linear-gradient(#454545, #454545) left / 2px 40px no-repeat;
}
.flag-group .tool:first-child {
    width: 70px;
}
.tabs {
    display: flex;
    flex: none;
    height: 57px;
    border-bottom: 1px solid #000;
    background: #323232;
}
.tab {
    flex: 1;
    padding-left: 52px;
    font-size: 22px;
    font-weight: 500;
    color: #fff;
}
.new-tab {
    display: flex;
    align-items: center;
    justify-content: center;
    width: 48px;
    padding-left: 4px;
    border-top: 1px solid #000;
    border-left: 2px solid #555;
    background: #1d1d1d;
    color: #8a8a8a;
}
.new-tab svg {
    stroke-width: 2;
}

/* Message list */
.list {
    position: relative;
    display: flex;
    flex: none;
    padding: 0 0 0 20px;
    background: linear-gradient(#3a3a3a, #3a3a3a) 0 53px / 100% 2px no-repeat #1b1b1b;
}
.messages {
    flex: 1;
    width: 100%;
    margin: 0 20px 8px 0;
    table-layout: fixed;
    border-spacing: 0;
    font-size: 25px;
}
.c-sort {
    width: 65px;
}
.c-dot {
    width: 53px;
}
.c-from {
    width: 216px;
}
.c-date {
    width: 216px;
}
.c-box {
    width: 220px;
}
.messages th {
    height: 66px;
    padding: 0 0 0 12px;
    border-bottom: 12px solid transparent;
    background: linear-gradient(#444, #444) right center / 2px 32px no-repeat padding-box;
    font-size: 22px;
    font-weight: 500;
    text-align: left;
    color: #fff;
}
.messages .sorted {
    font-weight: 600;
}
.messages th svg,
.messages th span {
    display: inline-block;
    vertical-align: middle;
}
.sorted svg {
    margin-left: 20px;
    color: #999;
    stroke-width: 2;
}
.messages th .sort {
    margin-left: 9px;
    stroke-width: 1.8;
    color: #999;
}
.ring {
    width: 14px;
    height: 14px;
    margin-left: 7px;
    border: 2px solid #999;
    border-radius: 50%;
}
.messages td {
    height: 48px;
    padding: 0 8px 0 12px;
    overflow: hidden;
    line-height: 30px;
    white-space: nowrap;
    color: #dedede;
}
.messages .text {
    padding-right: 0;
    font-weight: 500;
}
.selected td {
    background: #0058d0;
    color: #fff;
}
.selected td:first-child {
    border-radius: 10px 0 0 10px;
}
.selected td:last-child {
    border-radius: 0 10px 10px 0;
}
.dot {
    display: block;
    width: 15px;
    height: 15px;
    margin-left: 7px;
    border-radius: 50%;
    background: #0a84ff;
}
.gutter {
    flex: none;
    width: 22px;
    padding: 6px 0 0 7px;
    border-left: 1px solid #3e3e3e;
    background: #2b2b2b;
    overflow: hidden;
}
.list-gutter {
    margin-top: 55px;
}
.thumb {
    width: 16px;
    height: 107px;
    border-radius: 8px;
    background: #6b6b6b;
}
.reader-thumb {
    height: 115px;
}
.list-tiles {
    position: absolute;
    z-index: 1;
    top: 43px;
    left: 6px;
    width: 1140px;
    height: 680px;
}

/* Message */
.reader {
    display: flex;
    flex: 1;
    min-height: 0;
    border-top: 2px solid #000;
}
.message {
    display: flex;
    flex: 1;
    flex-direction: column;
    min-width: 0;
    background: #f1f1f1;
}
.banner {
    display: flex;
    flex: none;
    align-items: center;
    gap: 18px;
    height: 72px;
    padding: 0 24px 0 74px;
    background: #3d4053;
    font-size: 25px;
    font-weight: 500;
    color: #e2e3e6;
}
.banner > svg {
    stroke-width: 1.5;
    color: #a4a6b0;
}
.load {
    position: relative;
    margin-left: auto;
}
.load-btn {
    display: block;
    width: 304px;
    height: 38px;
    border-radius: 8px;
    background: #6c707e;
    box-shadow: 0 1px 2px rgba(0, 0, 0, 0.4), inset 0 1px 0 rgba(255, 255, 255, 0.15);
    color: #ebecee;
}
.callout {
    position: absolute;
    z-index: 3;
    top: 85px;
    right: 21px;
    padding: 0 16px;
    border-radius: 7px;
    background: #f54927;
    box-shadow: 0 16px 36px rgba(0, 0, 0, 0.15);
    font-size: 27px;
    font-weight: 700;
    line-height: 48px;
    white-space: nowrap;
    color: #fff;
}
.pointer {
    position: absolute;
    top: -47px;
    left: 284px;
    fill: #f54927;
    stroke: none;
}
.envelope {
    position: relative;
    display: flex;
    flex: none;
    height: 216px;
    padding: 34px 68px 0;
    background: linear-gradient(#e3e3e3, #e3e3e3) center bottom / calc(100% - 136px) 2px no-repeat #fff;
    color: #262626;
}
.avatar {
    width: 64px;
    height: 64px;
    margin: 4px 20px 0 0;
    border-radius: 50%;
    background: linear-gradient(#a5abb9, #7f838d);
    font-size: 26px;
    font-weight: 600;
    line-height: 64px;
    text-align: center;
    color: #fff;
}
.details h2 {
    padding-bottom: 2px;
    font-size: 28px;
    font-weight: 600;
    line-height: 36px;
}
.details p {
    padding: 1px 0 0 2px;
    font-size: 24px;
    line-height: 37px;
}
.value {
    margin-left: 9px;
    color: #808080;
}
.location {
    display: flex;
    align-items: center;
    gap: 8px;
    height: 38px;
    margin-left: auto;
    padding-right: 544px;
    font-size: 22px;
    color: #808080;
}
.location svg {
    stroke-width: 2.5;
    color: #4a4a4a;
}
.quick {
    position: absolute;
    z-index: 2;
    bottom: -24px;
    left: 50%;
    display: flex;
    align-items: center;
    width: 236px;
    height: 50px;
    margin-left: -118px;
    border: 2px solid #e3e3e3;
    border-radius: 10px;
    background: #fff;
    color: #a2a2a2;
}
.quick button {
    display: flex;
    flex: 1;
    align-items: center;
    justify-content: center;
    height: 26px;
}
.quick button:first-child {
    flex: none;
    width: 70px;
    border-right: 2px solid #e3e3e3;
}
.body {
    flex: 1;
    padding-top: 14px;
}
.card {
    display: flex;
    flex-direction: column;
    max-width: 1360px;
    height: 100%;
    margin: 0 auto;
    padding: 60px 80px 0;
    border: 2px solid #e3e3e3;
    border-bottom: none;
    border-radius: 10px 10px 0 0;
    background: #fff;
    font-family: "Liberation Sans", Arial, sans-serif;
    color: #262626;
}
.intro {
    display: flex;
    gap: 18px;
    margin-bottom: 44px;
}
.missing text {
    font-size: 20px;
    fill: #fff;
    stroke: none;
}
.stories {
    font-size: 26px;
    line-height: 30px;
}
.handle-tiles {
    width: 377px;
    height: 39px;
    margin-top: 6px;
}
.digest {
    flex: 1;
    padding: 2px;
    border: 1px solid #b5b5b5;
    border-bottom: none;
    font-size: 24px;
    line-height: 28px;
    color: #111;
}
```
